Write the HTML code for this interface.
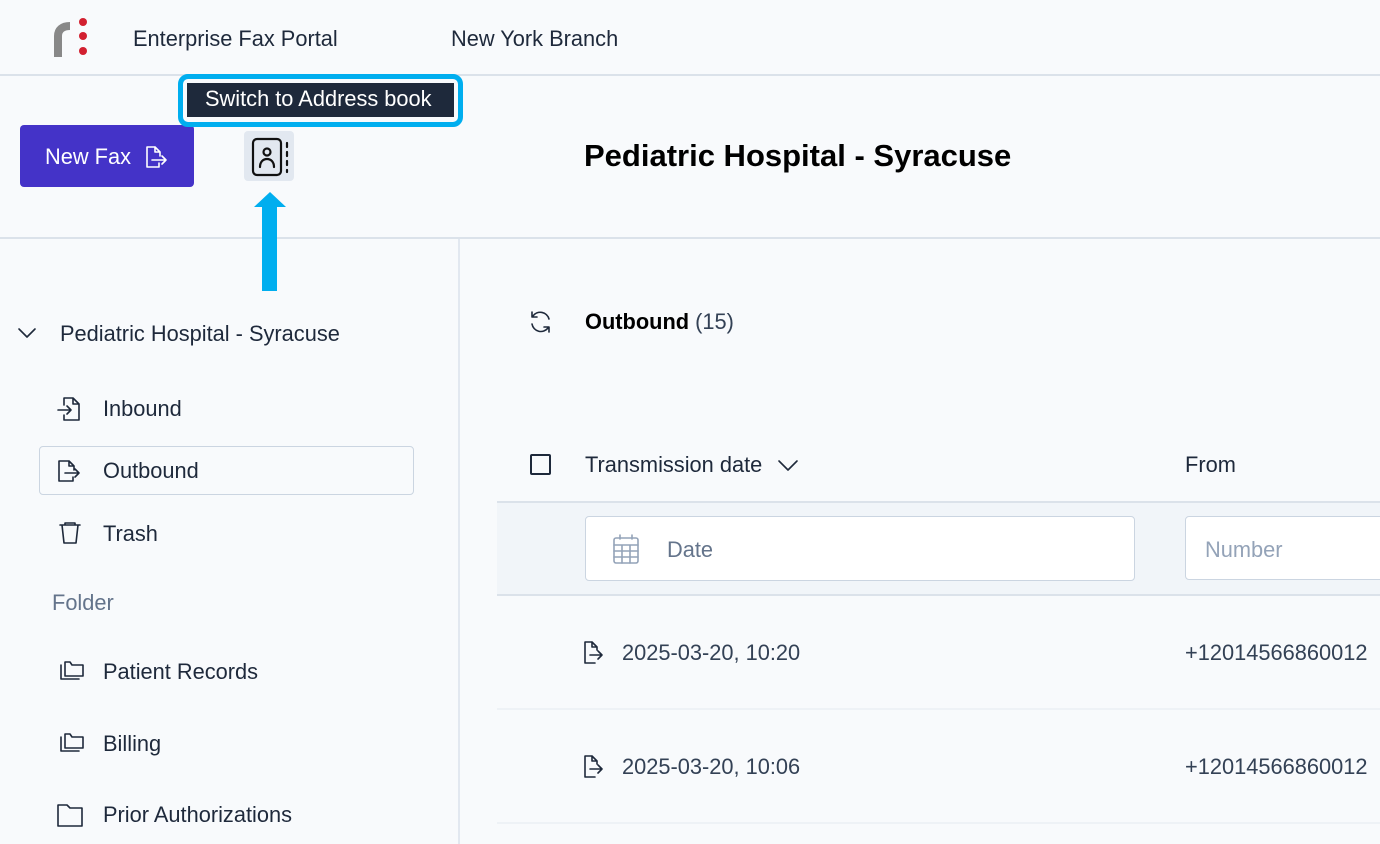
<!DOCTYPE html>
<html><head><meta charset="utf-8"><style>
*{box-sizing:border-box;margin:0;padding:0}
body{width:1380px;height:844px;overflow:hidden;background:#f8fafc;font-family:"Liberation Sans",Arial,sans-serif;color:#1e293b;position:relative}
.a{position:absolute}
.t{font-size:21.8px;white-space:nowrap;line-height:24px}
svg{position:absolute;fill:none;stroke:#1e293b;stroke-width:1.6;stroke-linecap:round;stroke-linejoin:round}
</style></head><body>
<!-- header -->
<div class="a" style="left:0;top:74px;width:1380px;height:2px;background:#dbe2ea"></div>
<svg style="left:50px;top:16px" width="30" height="42" viewBox="0 0 30 42"><path d="M8 41V20c0-6 4-10 12-10" stroke="#888" stroke-width="8" stroke-linecap="butt"/></svg>
<div class="a" style="left:79px;top:18px;width:8px;height:8px;border-radius:50%;background:#d22030"></div>
<div class="a" style="left:79px;top:32px;width:8px;height:8px;border-radius:50%;background:#d22030"></div>
<div class="a" style="left:79px;top:47px;width:8px;height:8px;border-radius:50%;background:#d22030"></div>
<div class="a t" style="left:133px;top:27px">Enterprise Fax Portal</div>
<div class="a t" style="left:451px;top:27px">New York Branch</div>
<!-- toolbar -->
<div class="a" style="left:0;top:237px;width:1380px;height:2px;background:#dbe2ea"></div>
<div class="a" style="left:20px;top:125px;width:174px;height:62px;background:#4433c8;border-radius:4px"></div>
<div class="a t" style="left:45px;top:145px;color:#fff">New Fax</div>
<svg style="left:142px;top:144px" width="28" height="26" viewBox="0 0 28 26"><g stroke="#fff"><path d="M13 3H5v20h12v-4M13 3v5h5M13 3l5 5v4"/><path d="M10 16h14M20 12l4 4-4 4"/></g></svg>
<div class="a" style="left:244px;top:131px;width:50px;height:50px;background:#e2e8f0;border-radius:4px"></div>
<svg style="left:250px;top:137px" width="40" height="40" viewBox="0 0 40 40"><g stroke="#111" stroke-width="2.2"><rect x="3" y="2" width="28" height="36" rx="4"/><circle cx="17" cy="15" r="3.5"/><path d="M10 30c0-5 3-8 7-8s7 3 7 8"/><path d="M37 6v4M37 15v4M37 24v4M37 33v2"/></g></svg>
<div class="a" style="left:178px;top:74px;width:285px;height:53px;border:5px solid #00aeef;border-radius:10px"></div>
<div class="a" style="left:187px;top:83px;width:267px;height:34px;background:#1e293b"></div>
<div class="a t" style="left:205px;top:87px;color:#fff">Switch to Address book</div>
<div class="a" style="left:262px;top:204px;width:15px;height:87px;background:#00aeef"></div>
<div class="a" style="left:254px;top:192px;width:0;height:0;border-left:16px solid transparent;border-right:16px solid transparent;border-bottom:15px solid #00aeef"></div>
<div class="a" style="left:584px;top:139px;font-size:31px;line-height:34px;font-weight:bold;color:#000;white-space:nowrap">Pediatric Hospital - Syracuse</div>
<!-- sidebar -->
<div class="a" style="left:458px;top:239px;width:2px;height:605px;background:#e2e8f0"></div>
<svg style="left:16px;top:323px" width="22" height="20"><path d="M3 6l8 8 8-8"/></svg>
<div class="a t" style="left:60px;top:322px">Pediatric Hospital - Syracuse</div>
<svg style="left:56px;top:395px" width="28" height="28" viewBox="0 0 28 28"><path d="M8 10V3h9l6 6v16H8v-5M17 3v6h6M2 15h13M11 11l4 4-4 4"/></svg>
<div class="a t" style="left:103px;top:397px">Inbound</div>
<div class="a" style="left:39px;top:446px;width:375px;height:49px;border:1.5px solid #cbd5e1;border-radius:4px;background:#f8fafc"></div>
<svg style="left:56px;top:458px" width="28" height="26" viewBox="0 0 28 26"><path d="M13 3H3v20h14v-4M13 3v5h5M13 3l5 5v4M9 15h14M19 11l4 4-4 4"/></svg>
<div class="a t" style="left:103px;top:459px">Outbound</div>
<svg style="left:56px;top:520px" width="28" height="28" viewBox="0 0 28 28"><path d="M4 5h20M9 5V3h10v2M6 5l2 18h12l2-18"/></svg>
<div class="a t" style="left:103px;top:522px">Trash</div>
<div class="a t" style="left:52px;top:591px;color:#64748b">Folder</div>
<svg style="left:56px;top:658px" width="30" height="26" viewBox="0 0 30 26"><path d="M5 7v14h18M9 4v14h18V7H16l-2-3z"/></svg>
<div class="a t" style="left:103px;top:660px">Patient Records</div>
<svg style="left:56px;top:730px" width="30" height="26" viewBox="0 0 30 26"><path d="M5 7v14h18M9 4v14h18V7H16l-2-3z"/></svg>
<div class="a t" style="left:103px;top:732px">Billing</div>
<svg style="left:56px;top:801px" width="30" height="28" viewBox="0 0 30 28"><path d="M2 4h9l3 3h12v18H2z"/></svg>
<div class="a t" style="left:103px;top:803px">Prior Authorizations</div>
<!-- content -->
<svg style="left:527px;top:308px" width="28" height="28" viewBox="0 0 28 28"><path d="M22 11a9 9 0 0 0-16-3M5 4v5h5M5 16a9 9 0 0 0 16 4M22 24v-5h-5"/></svg>
<div class="a t" style="left:585px;top:310px"><b style="color:#000">Outbound</b> <span style="color:#334155">(15)</span></div>
<div class="a" style="left:530px;top:454px;width:21px;height:21px;border:2.5px solid #1e293b;border-radius:2px"></div>
<div class="a t" style="left:585px;top:453px">Transmission date</div>
<svg style="left:776px;top:455px" width="24" height="20"><path d="M3 6l9 9 9-9"/></svg>
<div class="a t" style="left:1185px;top:453px">From</div>
<div class="a" style="left:497px;top:501px;width:883px;height:95px;background:#f1f5f9;border-top:2px solid #dbe2ea;border-bottom:2px solid #dbe2ea"></div>
<div class="a" style="left:585px;top:516px;width:550px;height:65px;background:#fff;border:1.5px solid #cbd5e1;border-radius:4px"></div>
<svg style="left:612px;top:533px" width="30" height="32" viewBox="0 0 30 32"><g stroke="#94a3b8"><rect x="2" y="5" width="24" height="25" rx="2"/><path d="M8 2v4M20 2v4M2 12h24M2 18h24M2 24h24M10 12v18M18 12v18"/></g></svg>
<div class="a t" style="left:667px;top:538px;color:#64748b">Date</div>
<div class="a" style="left:1185px;top:516px;width:220px;height:64px;background:#fff;border:1.5px solid #cbd5e1;border-radius:4px"></div>
<div class="a t" style="left:1205px;top:538px;color:#94a3b8">Number</div>
<svg style="left:582px;top:640px" width="28" height="26" viewBox="0 0 28 26"><path d="M10 2H3v21h10M10 2v5h5M10 2l5 5v3M8 15h12M16 11l4 4-4 4"/></svg>
<div class="a t" style="left:622px;top:641px;color:#334155">2025-03-20, 10:20</div>
<div class="a t" style="left:1185px;top:641px;color:#334155">+12014566860012</div>
<div class="a" style="left:497px;top:708px;width:883px;height:2px;background:#eef2f6"></div>
<svg style="left:582px;top:754px" width="28" height="26" viewBox="0 0 28 26"><path d="M10 2H3v21h10M10 2v5h5M10 2l5 5v3M8 15h12M16 11l4 4-4 4"/></svg>
<div class="a t" style="left:622px;top:755px;color:#334155">2025-03-20, 10:06</div>
<div class="a t" style="left:1185px;top:755px;color:#334155">+12014566860012</div>
<div class="a" style="left:497px;top:822px;width:883px;height:2px;background:#eef2f6"></div>
</body></html>
